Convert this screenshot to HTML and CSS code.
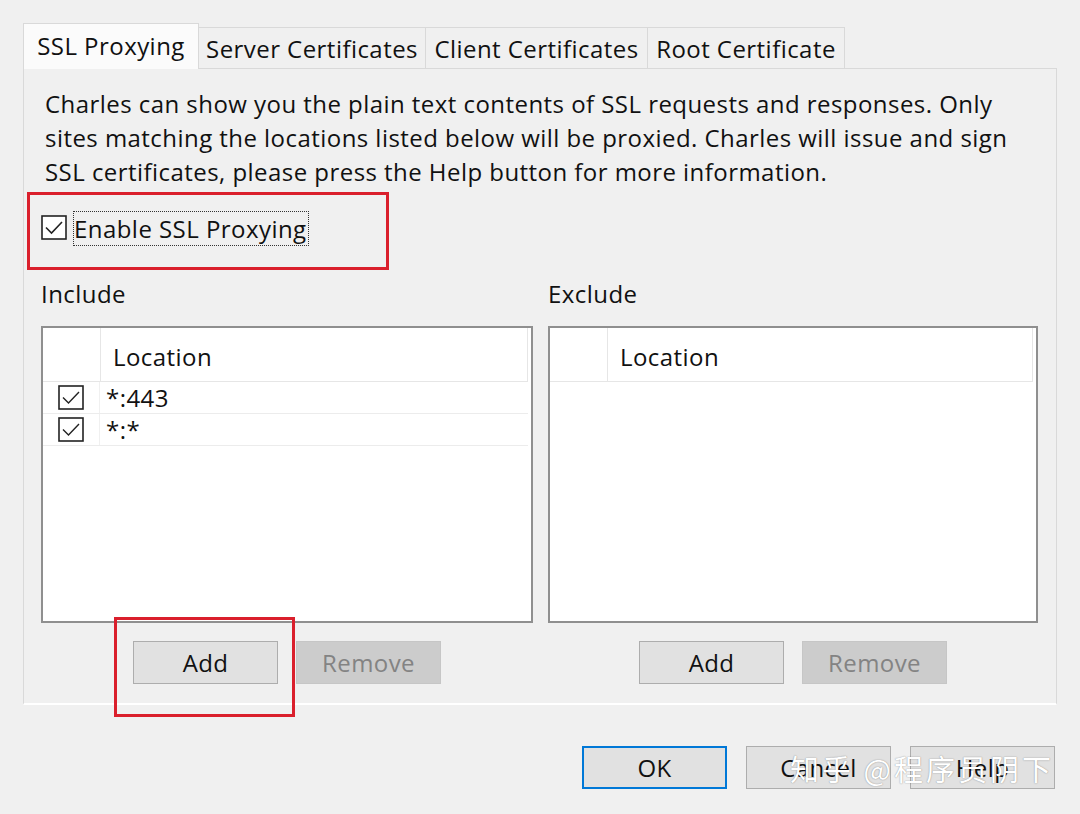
FILE: index.html
```html
<!DOCTYPE html>
<html lang="en">
<head>
<meta charset="utf-8">
<title>SSL Proxying Settings</title>
<link rel="stylesheet" href="styles.css">
</head>
<body>
<div class="dialog">
  <div class="tabs">
    <div class="tab tab-active tab-ssl">SSL Proxying</div>
    <div class="tab tab-server">Server Certificates</div>
    <div class="tab tab-client">Client Certificates</div>
    <div class="tab tab-root">Root Certificate</div>
  </div>
  <div class="panel">
    <p class="desc">Charles can show you the plain text contents of SSL requests and responses. Only<br>sites matching the locations listed below will be proxied. Charles will issue and sign<br>SSL certificates, please press the Help button for more information.</p>
    <div class="enable-row">
      <svg class="cb-big" viewBox="0 0 26 26" width="26" height="26"><rect x="1" y="1" width="24" height="23" fill="#fff" stroke="#222" stroke-width="1.6"/><polyline points="5,12.5 10.5,18 21,7" fill="none" stroke="#222" stroke-width="1.6"/></svg>
      <span class="focus-label">Enable SSL Proxying</span>
    </div>
    <div class="lists">
      <section class="list-col">
        <div class="list-label">Include</div>
        <div class="table">
          <div class="thead">
            <div class="th-check"></div>
            <div class="th-loc">Location</div>
          </div>
          <div class="row">
            <div class="td-check"><svg viewBox="0 0 26 26" width="26" height="26"><rect x="1" y="1" width="24" height="23" fill="#fff" stroke="#222" stroke-width="1.6"/><polyline points="5,12.5 10.5,18 21,7" fill="none" stroke="#222" stroke-width="1.4"/></svg></div>
            <div class="td-loc">*:443</div>
          </div>
          <div class="row">
            <div class="td-check"><svg viewBox="0 0 26 26" width="26" height="26"><rect x="1" y="1" width="24" height="23" fill="#fff" stroke="#222" stroke-width="1.6"/><polyline points="5,12.5 10.5,18 21,7" fill="none" stroke="#222" stroke-width="1.4"/></svg></div>
            <div class="td-loc">*:*</div>
          </div>
        </div>
        <div class="btn-row">
          <button class="btn">Add</button>
          <button class="btn btn-disabled" disabled>Remove</button>
        </div>
      </section>
      <section class="list-col">
        <div class="list-label">Exclude</div>
        <div class="table table-narrow">
          <div class="thead">
            <div class="th-check"></div>
            <div class="th-loc">Location</div>
          </div>
        </div>
        <div class="btn-row">
          <button class="btn">Add</button>
          <button class="btn btn-disabled" disabled>Remove</button>
        </div>
      </section>
    </div>
  </div>
  <div class="footer">
    <button class="btn btn-default">OK</button>
    <button class="btn">Cancel</button>
    <button class="btn">Help</button>
  </div>
  <div class="annot annot-enable"></div>
  <div class="annot annot-add"></div>
  <div class="watermark">知乎 @程序员阴下</div>
</div>
</body>
</html>
```
FILE: styles.css
```css
html, body {
  margin: 0;
  padding: 0;
  background: #f0f0f0;
}
body {
  width: 1080px;
  height: 814px;
  overflow: hidden;
  font-family: "Open Sans", "Noto Sans", sans-serif;
  font-size: 24px;
  letter-spacing: 0.45px;
  color: #111;
}
.dialog {
  position: relative;
  padding: 23px 0 0 23px;
  height: 791px;
}
.tabs {
  display: flex;
  align-items: flex-end;
  height: 46px;
  position: relative;
  z-index: 2;
}
.tab {
  box-sizing: border-box;
  height: 41px;
  margin-bottom: 1px;
  border: 1px solid #d9d9d9;
  border-bottom: none;
  background: #f0f0f0;
  line-height: 42px;
  text-align: center;
  white-space: nowrap;
  margin-left: -1px;
}
.tab-active {
  height: 46px;
  margin-bottom: 0;
  margin-left: 0;
  background: #fbfbfb;
  line-height: 44px;
  border-color: #d9d9d9;
}
.tab-ssl { width: 176px; }
.tab-server { width: 228px; }
.tab-client { width: 223px; }
.tab-root { width: 198px; }
.panel {
  box-sizing: border-box;
  width: 1034px;
  height: 637px;
  margin-top: -1px;
  border: 1px solid #d9d9d9;
  border-bottom: 2px solid #fff;
  background: #f0f0f0;
  padding: 18px 0 0 17px;
}
.desc {
  margin: 0 0 0 4px;
  line-height: 34px;
  white-space: nowrap;
}
.enable-row {
  display: flex;
  align-items: center;
  gap: 7px;
  height: 36px;
  margin-top: 21px;
}
.cb-big {
  display: block;
}
.focus-label {
  line-height: 33px;
  outline: 1px dotted #333;
  padding: 0 1px 0 0;
}
.lists {
  display: grid;
  grid-template-columns: 492px 490px;
  column-gap: 15px;
  margin-top: 33px;
}
.list-label {
  line-height: 30px;
  height: 30px;
  margin-bottom: 17px;
}
.table {
  box-sizing: border-box;
  height: 297px;
  border: 2px solid #8f8f8f;
  background: #fff;
}
.thead {
  display: flex;
  height: 53px;
  border-bottom: 1px solid #e6e6e6;
  margin-right: 3px;
}
.th-check {
  width: 57px;
  border-right: 1px solid #e6e6e6;
}
.th-loc {
  flex: 1;
  padding-left: 12px;
  line-height: 57px;
  border-right: 1px solid #e6e6e6;
}
.row {
  display: flex;
  height: 31px;
  border-bottom: 1px solid #ececec;
  margin-right: 3px;
}
.td-check {
  width: 57px;
  border-right: 1px solid #f0f0f0;
  display: flex;
  align-items: center;
  padding-left: 15px;
  box-sizing: border-box;
}
.td-check svg {
  display: block;
}
.td-loc {
  flex: 1;
  padding-left: 6px;
  line-height: 32px;
}
.btn-row {
  display: flex;
  justify-content: center;
  gap: 18px;
  margin-top: 18px;
}
.btn {
  box-sizing: border-box;
  width: 145px;
  height: 43px;
  padding: 0;
  border: 1.5px solid #adadad;
  background: #e1e1e1;
  font-family: "Open Sans", "Noto Sans", sans-serif;
  font-size: 24px;
  letter-spacing: 0.4px;
  color: #111;
}
.btn-disabled {
  background: #cccccc;
  border-color: #c6c6c6;
  color: #838383;
}
.footer {
  display: flex;
  justify-content: flex-end;
  gap: 19px;
  width: 1032px;
  margin-top: 41px;
}
.btn-default {
  border: 2px solid #0078d7;
}
.annot {
  position: absolute;
  box-sizing: border-box;
  border: 3px solid #da1f2c;
}
.annot-enable {
  left: 27px;
  top: 192px;
  width: 362px;
  height: 78px;
}
.annot-add {
  left: 114px;
  top: 617px;
  width: 181px;
  height: 100px;
}
.watermark {
  position: absolute;
  left: 790px;
  top: 748px;
  font-family: "Noto Sans CJK SC", sans-serif;
  font-size: 29px;
  line-height: 40px;
  letter-spacing: 3px;
  color: #fff;
  white-space: nowrap;
  text-shadow: 0 0 1px rgba(0,0,0,0.35), 0 0 2px rgba(0,0,0,0.15);
}
```
